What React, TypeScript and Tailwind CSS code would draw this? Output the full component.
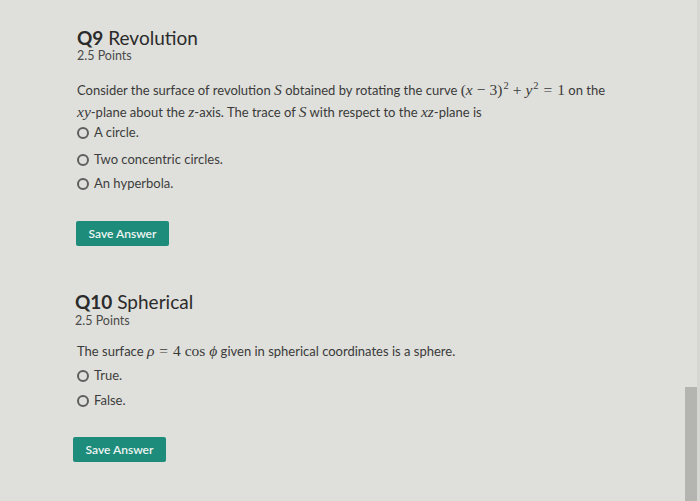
import React from 'react';

const serif = "font-['Liberation_Serif',serif]";

const M = ({ children }: { children: React.ReactNode }) => (
  <span className={`${serif} italic text-[15.5px] leading-none`}>{children}</span>
);
const R = ({ children }: { children: React.ReactNode }) => (
  <span className={`${serif} text-[15.5px] leading-none`}>{children}</span>
);
const Op = ({ children, w = 'mx-[5px]' }: { children: React.ReactNode; w?: string }) => (
  <span className={`${serif} text-[15.5px] leading-none ${w}`}>{children}</span>
);
const Sup = ({ children }: { children: React.ReactNode }) => (
  <span className={`${serif} text-[10.5px] leading-none relative top-[-6px] ml-[1px]`}>{children}</span>
);

function Option({ label, className = '' }: { label: string; className?: string }) {
  return (
    <div className={`flex items-center h-4 gap-[5px] ${className}`}>
      <span className="w-[12px] h-[12px] rounded-full border-2 border-[#5e5e5e] shrink-0" />
      <span className="text-[13px] text-[#3d3d3d]">{label}</span>
    </div>
  );
}

function SaveButton({ className = '' }: { className?: string }) {
  return (
    <button
      className={`w-[93px] h-[25px] rounded-[2px] bg-[#1d8c7b] text-[#eef5f2] text-[12px] font-semibold ${className}`}
    >
      Save Answer
    </button>
  );
}

export default function App() {
  return (
    <div className="w-[700px] h-[501px] bg-[#dfe0db] flex overflow-hidden font-['Lato',sans-serif] text-[#333]">
      <div className="flex-1 pl-[75px] pt-[28px] flex flex-col items-start">
        {/* Q9 */}
        <div className="ml-[2px]">
          <h2 className="text-[19px] leading-[20px] text-[#2b2b2b]">
            <span className="font-bold">Q9</span> Revolution
          </h2>
          <p className="mt-[1px] text-[12.5px] leading-[14px] text-[#4a4a4a]">2.5 Points</p>
          <p className="mt-[16px] text-[13px] leading-[22px] text-[#3a3a3a] whitespace-nowrap">
            Consider the surface of revolution <M>S</M> obtained by rotating the curve{' '}
            <R>(</R>
            <M>x</M>
            <Op w="mx-[4px]">−</Op>
            <R>3)</R>
            <Sup>2</Sup>
            <Op w="mx-[4px]">+</Op>
            <M>y</M>
            <Sup>2</Sup>
            <Op>=</Op>
            <R>1</R> on the
            <br />
            <M>xy</M>-plane about the <M>z</M>-axis. The trace of <M>S</M> with respect to the{' '}
            <M>xz</M>-plane is
          </p>
          <Option label="A circle." className="mt-[2px]" />
          <Option label="Two concentric circles." className="mt-[11px]" />
          <Option label="An hyperbola." className="mt-[8px]" />
        </div>
        <SaveButton className="mt-[29px] ml-[1px]" />

        {/* Q10 */}
        <h2 className="mt-[46px] text-[19px] leading-[20px] text-[#2b2b2b]">
          <span className="font-bold">Q10</span> Spherical
        </h2>
        <p className="mt-[2px] text-[12.5px] leading-[14px] text-[#4a4a4a]">2.5 Points</p>
        <p className="mt-[12px] ml-[2px] text-[13px] leading-[22px] text-[#3a3a3a] whitespace-nowrap">
          The surface <M>ρ</M>
          <Op>=</Op>
          <R>4 cos </R>
          <M>ϕ</M> given in spherical coordinates is a sphere.
        </p>
        <Option label="True." className="mt-[6px] ml-[2px]" />
        <Option label="False." className="mt-[9px] ml-[2px]" />
        <SaveButton className="mt-[28px] ml-[-2px]" />
      </div>

      {/* scrollbar */}
      <div className="w-[12px] flex flex-col justify-end">
        <div className="h-[114px] bg-[#b4b4b1]" />
      </div>
      <div className="w-[3px] bg-[#d6d6d2]" />
    </div>
  );
}
